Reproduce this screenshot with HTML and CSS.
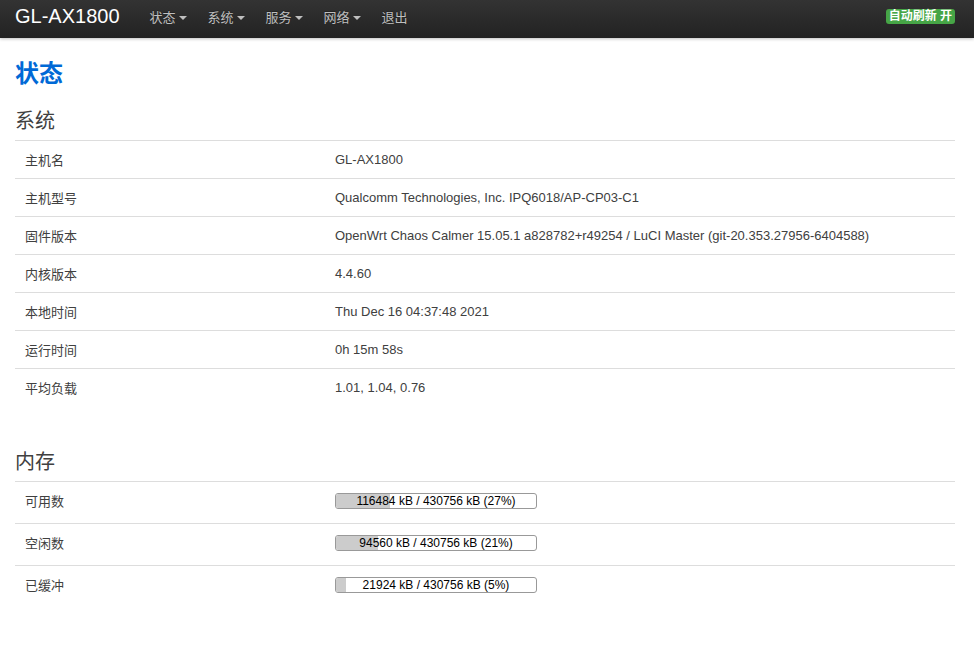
FILE: index.html
```html
<!DOCTYPE html>
<html lang="zh-CN">
<head>
<meta charset="utf-8">
<title>状态</title>
<link rel="stylesheet" href="styles.css">
</head>
<body>
<header class="navbar">
  <div class="brand">GL-AX1800</div>
  <nav class="menu">
    <span class="menu-item">状态<span class="caret"></span></span>
    <span class="menu-item">系统<span class="caret"></span></span>
    <span class="menu-item">服务<span class="caret"></span></span>
    <span class="menu-item">网络<span class="caret"></span></span>
    <span class="menu-item">退出</span>
  </nav>
  <span class="badge">自动刷新 开</span>
</header>
<main class="content">
  <h1 class="page-title">状态</h1>

  <h2 class="section-title">系统</h2>
  <div class="table">
    <div class="row"><div class="label">主机名</div><div class="value">GL-AX1800</div></div>
    <div class="row"><div class="label">主机型号</div><div class="value">Qualcomm Technologies, Inc. IPQ6018/AP-CP03-C1</div></div>
    <div class="row"><div class="label">固件版本</div><div class="value">OpenWrt Chaos Calmer 15.05.1 a828782+r49254 / LuCI Master (git-20.353.27956-6404588)</div></div>
    <div class="row"><div class="label">内核版本</div><div class="value">4.4.60</div></div>
    <div class="row"><div class="label">本地时间</div><div class="value">Thu Dec 16 04:37:48 2021</div></div>
    <div class="row"><div class="label">运行时间</div><div class="value">0h 15m 58s</div></div>
    <div class="row"><div class="label">平均负载</div><div class="value">1.01, 1.04, 0.76</div></div>
  </div>

  <h2 class="section-title mem-title">内存</h2>
  <div class="table">
    <div class="row row-tall"><div class="label">可用数</div><div class="value"><div class="bar"><div class="fill" style="width:27%"></div><span class="bar-text">116484 kB / 430756 kB (27%)</span></div></div></div>
    <div class="row row-tall"><div class="label">空闲数</div><div class="value"><div class="bar"><div class="fill" style="width:21%"></div><span class="bar-text">94560 kB / 430756 kB (21%)</span></div></div></div>
    <div class="row row-tall"><div class="label">已缓冲</div><div class="value"><div class="bar"><div class="fill" style="width:5%"></div><span class="bar-text">21924 kB / 430756 kB (5%)</span></div></div></div>
  </div>
</main>
</body>
</html>
```
FILE: styles.css
```css
* { box-sizing: border-box; }
html, body { margin: 0; padding: 0; background: #fff; }
body {
  font-family: "Liberation Sans", Arial, "Noto Sans CJK SC", sans-serif;
  font-size: 13px;
  color: #404040;
}
.navbar {
  height: 38px;
  background: linear-gradient(to bottom, #333333, #222222);
  display: flex;
  align-items: center;
  padding: 0 19px 0 15px;
  box-shadow: 0 1px 3px rgba(0,0,0,0.25);
}
.brand {
  color: #ffffff;
  font-size: 20px;
  line-height: 20px;
  margin-right: 20px;
  margin-top: -6px;
}
.menu {
  display: flex;
  align-items: center;
  flex: 1;
  margin-top: -5px;
}
.menu-item {
  color: #bfbfbf;
  font-size: 13px;
  padding: 0 11px 0 10px;
  display: flex;
  align-items: center;
  text-shadow: 0 -1px 0 rgba(0,0,0,0.25);
}
.caret {
  display: inline-block;
  width: 0;
  height: 0;
  margin-left: 3px;
  margin-top: 2px;
  border-left: 4px solid transparent;
  border-right: 4px solid transparent;
  border-top: 4px solid #bfbfbf;
}
.badge {
  background: #46a546;
  color: #ffffff;
  font-weight: bold;
  font-size: 12px;
  line-height: 15px;
  padding: 0 3px;
  border-radius: 3px;
  margin-top: -6px;
}
.content {
  padding: 0 19px 0 15px;
}
.page-title {
  margin: 21px 0 0;
  font-size: 24px;
  line-height: 30px;
  font-weight: bold;
  color: #0069d6;
}
.section-title {
  margin: 20px 0 7px;
  font-size: 20px;
  line-height: 24px;
  font-weight: normal;
  color: #404040;
}
.mem-title {
  margin-top: 44px;
}
.table {
  display: flex;
  flex-direction: column;
}
.row {
  display: flex;
  align-items: center;
  height: 38px;
  border-top: 1px solid #dddddd;
  padding-bottom: 1px;
}
.row-tall {
  height: 42px;
  padding-bottom: 4px;
}
.label {
  width: 320px;
  padding-left: 10px;
}
.value {
  flex: 1;
}
.bar {
  position: relative;
  width: 202px;
  height: 16px;
  border: 1px solid #999999;
  border-radius: 3px;
  background: #ffffff;
  overflow: hidden;
}
.fill {
  height: 100%;
  background: #cccccc;
}
.bar-text {
  position: absolute;
  left: 0;
  right: 0;
  top: 0;
  text-align: center;
  font-size: 12px;
  line-height: 14px;
  color: #000000;
}
```
